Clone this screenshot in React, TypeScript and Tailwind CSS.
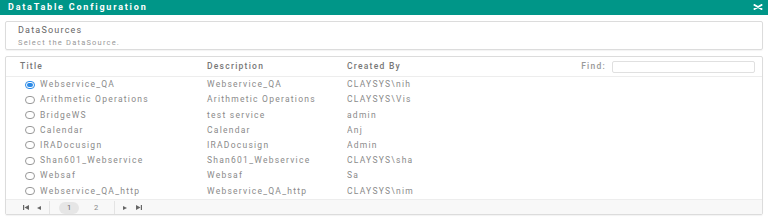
import React from "react";

interface Source {
  title: string;
  description: string;
  createdBy: string;
}

const sources: Source[] = [
  { title: "Webservice_QA", description: "Webservice_QA", createdBy: "CLAYSYS\\nih" },
  { title: "Arithmetic Operations", description: "Arithmetic Operations", createdBy: "CLAYSYS\\Vis" },
  { title: "BridgeWS", description: "test service", createdBy: "admin" },
  { title: "Calendar", description: "Calendar", createdBy: "Anj" },
  { title: "IRADocusign", description: "IRADocusign", createdBy: "Admin" },
  { title: "Shan601_Webservice", description: "Shan601_Webservice", createdBy: "CLAYSYS\\sha" },
  { title: "Websaf", description: "Websaf", createdBy: "Sa" },
  { title: "Webservice_QA_http", description: "Webservice_QA_http", createdBy: "CLAYSYS\\nim" },
];

function Radio({ checked }: { checked: boolean }) {
  return (
    <span
      className={
        "flex h-[8px] w-[10px] shrink-0 items-center justify-center rounded-full border " +
        (checked ? "border-[#2a8ae8]" : "border-[#999]")
      }
    >
      {checked && <span className="h-[4px] w-[6px] rounded-full bg-[#2a8ae8]" />}
    </span>
  );
}

export default function App() {
  const [selected, setSelected] = React.useState(0);

  return (
    <div
      className="h-[218px] w-[768px] overflow-hidden bg-white text-[8.5px] tracking-[1.25px] text-[#8a8a8a]"
      style={{ fontFamily: "Roboto, 'Liberation Sans', sans-serif" }}
    >
      {/* title bar */}
      <div className="flex h-[15px] items-center justify-between bg-[#009688] pl-[8px] pr-[5px]">
        <span className="text-[9px] font-bold tracking-[1.8px] text-white">DataTable Configuration</span>
        <svg width="10" height="6" viewBox="0 0 10 6" className="mb-[2px]">
          <path d="M1.5 1 L8.5 5 M8.5 1 L1.5 5" stroke="white" strokeWidth="2" strokeLinecap="round" />
        </svg>
      </div>

      <div className="flex flex-col gap-[6px] px-[5px] pt-[6px]">
        {/* datasource heading */}
        <div className="flex h-[29px] flex-col justify-center gap-[2px] rounded-[2px] border border-[#dcdcdc] pl-[12px] shadow-[0_1px_1px_rgba(0,0,0,0.05)]">
          <div className="text-[9px] leading-[11px] tracking-[1.2px] text-[#666]">DataSources</div>
          <div className="text-[7.5px] leading-[9px] tracking-[1.2px] text-[#999]">Select the DataSource.</div>
        </div>

        {/* table */}
        <div className="flex h-[159px] flex-col overflow-hidden rounded-[2px] border border-[#dcdcdc] shadow-[0_1px_1px_rgba(0,0,0,0.05)]">
          <div className="flex h-[20px] shrink-0 items-center border-b border-[#ededed] pl-[14px] pr-[7px] font-medium text-[#777]">
            <span className="w-[187px]">Title</span>
            <span className="w-[140px]">Description</span>
            <span className="flex-1">Created By</span>
            <span className="mr-[6px] text-[#999]">Find:</span>
            <input className="h-[12px] w-[143px] rounded-[2px] border border-[#e0e0e0] bg-white outline-none" />
          </div>

          <div className="flex flex-1 flex-col">
            {sources.map((s, idx) => (
              <div
                key={s.title}
                className="flex h-[15.2px] shrink-0 cursor-pointer items-center pl-[19px]"
                onClick={() => setSelected(idx)}
              >
                <span className="flex w-[182px] items-center gap-[5px]">
                  <Radio checked={selected === idx} />
                  <span>{s.title}</span>
                </span>
                <span className="w-[140px]">{s.description}</span>
                <span className="w-[80px] overflow-hidden whitespace-nowrap">{s.createdBy}</span>
              </div>
            ))}
          </div>

          {/* pager */}
          <div className="flex h-[17px] shrink-0 items-center border-t border-[#ededed] bg-[#f8f8f8] pl-[17px] text-[#666]">
            <svg width="6" height="5" viewBox="0 0 6 5" className="mr-[8px]">
              <rect x="0" y="0" width="1.2" height="5" fill="#666" />
              <path d="M6 0 L1.5 2.5 L6 5 Z" fill="#666" />
            </svg>
            <svg width="4" height="4" viewBox="0 0 4 4">
              <path d="M4 0 L0 2 L4 4 Z" fill="#666" />
            </svg>
            <span className="mx-[8px] h-[14px] w-px bg-[#e4e4e4]" />
            <span className="ml-[1px] flex h-[12px] w-[20px] items-center justify-center rounded-full bg-[#e6e6e6] text-[7.5px] tracking-normal">
              1
            </span>
            <span className="ml-[15px] text-[7.5px] tracking-normal text-[#888]">2</span>
            <span className="ml-[16px] mr-[8px] h-[14px] w-px bg-[#e4e4e4]" />
            <svg width="4" height="4" viewBox="0 0 4 4" className="mr-[9px]">
              <path d="M0 0 L4 2 L0 4 Z" fill="#666" />
            </svg>
            <svg width="6" height="5" viewBox="0 0 6 5">
              <path d="M0 0 L4.5 2.5 L0 5 Z" fill="#666" />
              <rect x="4.8" y="0" width="1.2" height="5" fill="#666" />
            </svg>
          </div>
        </div>
      </div>
    </div>
  );
}
